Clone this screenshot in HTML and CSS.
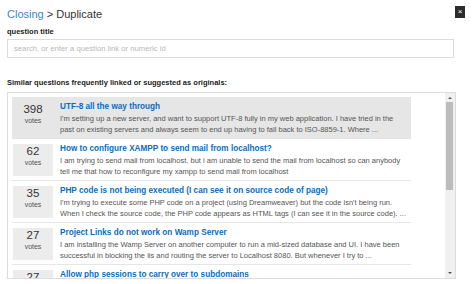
FILE: index.html
```html
<!DOCTYPE html>
<html lang="en">
<head>
    <meta charset="UTF-8">
    <meta name="viewport" content="width=device-width, initial-scale=1.0">
    <title>Closing - Duplicate</title>
    <link rel="stylesheet" href="styles.css">
</head>
<body>
    <div class="header">
        <h1 class="title"><a href="#">Closing</a> &gt; Duplicate</h1>
        <button class="close">&times;</button>
    </div>

    <label class="field-label" for="search">question title</label>
    <input type="text" id="search" class="search" placeholder="search, or enter a question link or numeric id">

    <p class="hint">Similar questions frequently linked or suggested as originals:</p>

    <div class="list-wrap">
        <div class="list">
            <div class="item selected">
                <div class="votes"><span class="count">398</span><span class="label">votes</span></div>
                <div class="summary">
                    <a href="#" class="q-title">UTF-8 all the way through</a>
                    <p class="excerpt">I'm setting up a new server, and want to support UTF-8 fully in my web application. I have tried in the past on existing servers and always seem to end up having to fall back to ISO-8859-1. Where ...</p>
                </div>
            </div>
            <div class="item">
                <div class="votes"><span class="count">62</span><span class="label">votes</span></div>
                <div class="summary">
                    <a href="#" class="q-title">How to configure XAMPP to send mail from localhost?</a>
                    <p class="excerpt">I am trying to send mail from localhost. but i am unable to send the mail from localhost so can anybody tell me that how to reconfigure my xampp to send mail from localhost</p>
                </div>
            </div>
            <div class="item">
                <div class="votes"><span class="count">35</span><span class="label">votes</span></div>
                <div class="summary">
                    <a href="#" class="q-title">PHP code is not being executed (I can see it on source code of page)</a>
                    <p class="excerpt">I'm trying to execute some PHP code on a project (using Dreamweaver) but the code isn't being run. When I check the source code, the PHP code appears as HTML tags (I can see it in the source code). ...</p>
                </div>
            </div>
            <div class="item">
                <div class="votes"><span class="count">27</span><span class="label">votes</span></div>
                <div class="summary">
                    <a href="#" class="q-title">Project Links do not work on Wamp Server</a>
                    <p class="excerpt">I am installing the Wamp Server on another computer to run a mid-sized database and UI. I have been successful in blocking the iis and routing the server to Localhost 8080. But whenever I try to ...</p>
                </div>
            </div>
            <div class="item">
                <div class="votes"><span class="count">27</span><span class="label">votes</span></div>
                <div class="summary">
                    <a href="#" class="q-title">Allow php sessions to carry over to subdomains</a>
                    <p class="excerpt">I use php sessions (not cookies, except for session id cookie) for all user data, and when a user goes to their profile user.mydomain.com they are immediately "logged out" until then remove the ...</p>
                </div>
            </div>
        </div>
        <div class="scrollbar">
            <span class="arrow up"></span>
            <span class="thumb"></span>
            <span class="arrow down"></span>
        </div>
    </div>
</body>
</html>
```

FILE: styles.css
```css
body {
    margin: 0;
    padding: 0 18px 0 7px;
    background: #fff;
    color: #333;
    font-family: "Liberation Sans", Arial, sans-serif;
}

.header {
    display: flex;
    justify-content: space-between;
    align-items: flex-start;
    margin-right: -9px;
    padding-top: 6px;
}

.title {
    margin: 1px 0 0;
    font-size: 11px;
    font-weight: normal;
    line-height: 14px;
    color: #333;
}

.title a {
    color: #3d86c8;
    text-decoration: none;
}

.close {
    width: 10px;
    height: 12px;
    padding: 0;
    border: none;
    background: #2b2b2b;
    color: #fff;
    font-family: "Liberation Sans", Arial, sans-serif;
    font-size: 8px;
    line-height: 12px;
    cursor: pointer;
}

.field-label {
    display: block;
    margin-top: 6px;
    font-size: 7.5px;
    font-weight: bold;
    line-height: 10px;
    color: #222;
}

.search {
    display: block;
    box-sizing: border-box;
    width: 447px;
    height: 19px;
    margin: 2px 0 0;
    padding: 0 6px;
    border: 1px solid #dcdcdc;
    font-family: "Liberation Sans", Arial, sans-serif;
    font-size: 7.7px;
    color: #333;
    outline: none;
}

.search::placeholder {
    color: #b8b8b8;
}

.hint {
    margin: 20px 0 4px;
    font-size: 7.5px;
    font-weight: bold;
    line-height: 10px;
    color: #222;
}

.list-wrap {
    display: flex;
    box-sizing: border-box;
    height: 187px;
    border: 1px solid #dcdcdc;
}

.list {
    flex: 1;
    min-width: 0;
    padding: 4px 34px 0 4px;
    overflow: hidden;
}

.scrollbar {
    display: flex;
    flex-direction: column;
    align-items: center;
    flex: 0 0 10px;
    background: #f0f0f0;
}

.arrow {
    width: 0;
    height: 0;
    border-left: 2px solid transparent;
    border-right: 2px solid transparent;
}

.arrow.up {
    margin: 4px 0 3px;
    border-bottom: 2px solid #555;
}

.arrow.down {
    margin: auto 0 4px;
    border-top: 2px solid #555;
}

.thumb {
    width: 7px;
    height: 88px;
    margin-right: 1px;
    background: #bcbcbc;
}

.item {
    display: flex;
    padding: 5px 4px 3px 1px;
    border-bottom: 1px solid #e6e6e6;
}

.item.selected {
    background: #e6e6e6;
}

.votes {
    display: flex;
    flex-direction: column;
    align-items: center;
    flex: 0 0 40px;
    height: 32px;
    margin-right: 7px;
    padding-top: 1px;
    box-sizing: border-box;
    background: #ececec;
}

.item.selected .votes {
    background: transparent;
}

.count {
    font-size: 11.5px;
    line-height: 13px;
    color: #333;
}

.label {
    font-size: 7px;
    line-height: 9px;
    color: #555;
}

.summary {
    flex: 1;
    min-width: 0;
}

.q-title {
    display: block;
    font-size: 8.2px;
    font-weight: bold;
    line-height: 10px;
    color: #0b6cbf;
    text-decoration: none;
    white-space: nowrap;
    overflow: hidden;
}

.excerpt {
    max-height: 22px;
    margin: 1px 0 0;
    overflow: hidden;
    font-size: 7.5px;
    line-height: 11px;
    color: #555;
}
```
